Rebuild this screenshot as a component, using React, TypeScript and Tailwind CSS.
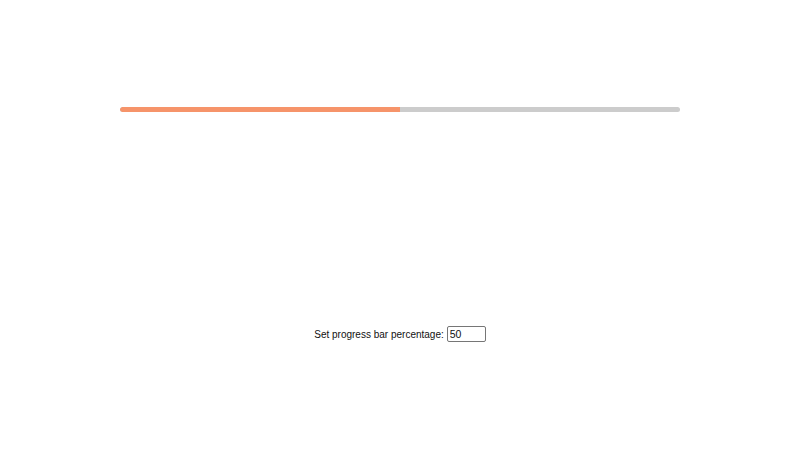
import React, { useState } from 'react';

export default function App() {
  const [pct, setPct] = useState('50');
  const value = Math.max(0, Math.min(100, Number(pct) || 0));

  return (
    <div className="w-[800px] h-[450px] bg-white flex flex-col items-center font-['Liberation_Sans',Arial,sans-serif] text-black">
      {/* Progress bar */}
      <div className="mt-[107px] w-[560px] h-[5px] rounded-full bg-[#cccccc] overflow-hidden flex">
        <div className="h-full bg-[#f6946a] rounded-l-full" style={{ width: `${value}%` }} />
      </div>

      {/* Control */}
      <div className="mt-[214px] flex items-center text-[10px] text-[#111]">
        <label htmlFor="pct">Set progress bar percentage:</label>
        <input
          id="pct"
          value={pct}
          onChange={(e) => setPct(e.target.value)}
          className="ml-[3px] w-[39px] h-[16px] px-[2px] border border-[#767676] rounded-[2px] text-[10.5px] outline-none"
        />
      </div>
    </div>
  );
}
